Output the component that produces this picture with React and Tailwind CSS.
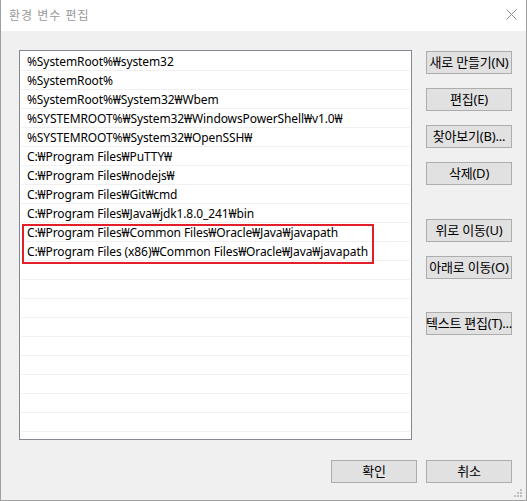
import React from "react";

const paths = [
  "%SystemRoot%₩system32",
  "%SystemRoot%",
  "%SystemRoot%₩System32₩Wbem",
  "%SYSTEMROOT%₩System32₩WindowsPowerShell₩v1.0₩",
  "%SYSTEMROOT%₩System32₩OpenSSH₩",
  "C:₩Program Files₩PuTTY₩",
  "C:₩Program Files₩nodejs₩",
  "C:₩Program Files₩Git₩cmd",
  "C:₩Program Files₩Java₩jdk1.8.0_241₩bin",
  "C:₩Program Files₩Common Files₩Oracle₩Java₩javapath",
  "C:₩Program Files (x86)₩Common Files₩Oracle₩Java₩javapath",
];

const rows = [...paths, ...Array(9).fill("")];

const font = {
  fontFamily: '"Noto Sans", "Noto Sans CJK KR", sans-serif',
};

const Btn = ({ children, className = "" }) => (
  <button
    className={`h-[23px] w-[86px] bg-[#e1e1e1] border border-[#adadad] text-[13px] text-black leading-none flex items-center justify-center whitespace-nowrap tracking-[-0.2px] ${className}`}
  >
    {children}
  </button>
);

const App = () => {
  return (
    <div
      className="w-[527px] h-[501px] flex flex-col border-x border-b border-[#a0a0a0] bg-[#f0f0f0]"
      style={font}
    >
      {/* title bar */}
      <div className="h-[31px] bg-white flex items-center justify-between pl-[8px] pr-[9px] shrink-0">
        <span className="text-[12px] text-[#9a9a9a] tracking-[1px]">환경 변수 편집</span>
        <svg width="11" height="11" viewBox="0 0 11 11" className="mt-[-2px]">
          <path d="M0.5 0.5 L10.5 10.5 M10.5 0.5 L0.5 10.5" stroke="#8a8a8a" strokeWidth="1" />
        </svg>
      </div>

      {/* body */}
      <div className="flex-1 relative pl-[18px] pr-[14px] pt-[19px]">
        <div className="flex gap-[14px]">
          <div className="relative w-[393px] h-[390px] bg-white border border-[#828790] px-[1px] pt-[1px] overflow-hidden">
            {rows.map((p, i) => (
              <div
                key={i}
                className="h-[19px] border-b border-[#f0f0f0] pl-[6px] pt-[1px] flex items-center text-[12px] text-black whitespace-nowrap tracking-[-0.1px]"
              >
                {p}
              </div>
            ))}
            {/* highlight */}
            <div className="absolute left-[2px] top-[173px] w-[352px] h-[40px] border-2 border-[#e3202a]" />
          </div>

          <div className="flex flex-col">
            <Btn className="mt-[1px]">새로 만들기(N)</Btn>
            <Btn className="mt-[14px]">편집(E)</Btn>
            <Btn className="mt-[14px]">찾아보기(B)...</Btn>
            <Btn className="mt-[14px]">삭제(D)</Btn>
            <Btn className="mt-[34px]">위로 이동(U)</Btn>
            <Btn className="mt-[14px]">아래로 이동(O)</Btn>
            <Btn className="mt-[33px]">텍스트 편집(T)...</Btn>
          </div>
        </div>

        <div className="flex justify-end gap-[9px] mt-[20px]">
          <Btn>확인</Btn>
          <Btn>취소</Btn>
        </div>

        {/* resize grip */}
        <svg width="8" height="8" viewBox="0 0 8 8" className="absolute right-[4px] bottom-[3px]">
          <rect x="6" y="0" width="2" height="2" fill="#bdbdbd" />
          <rect x="3" y="3" width="2" height="2" fill="#bdbdbd" />
          <rect x="6" y="3" width="2" height="2" fill="#bdbdbd" />
          <rect x="0" y="6" width="2" height="2" fill="#bdbdbd" />
          <rect x="3" y="6" width="2" height="2" fill="#bdbdbd" />
          <rect x="6" y="6" width="2" height="2" fill="#bdbdbd" />
        </svg>
      </div>
    </div>
  );
};

export default App;
